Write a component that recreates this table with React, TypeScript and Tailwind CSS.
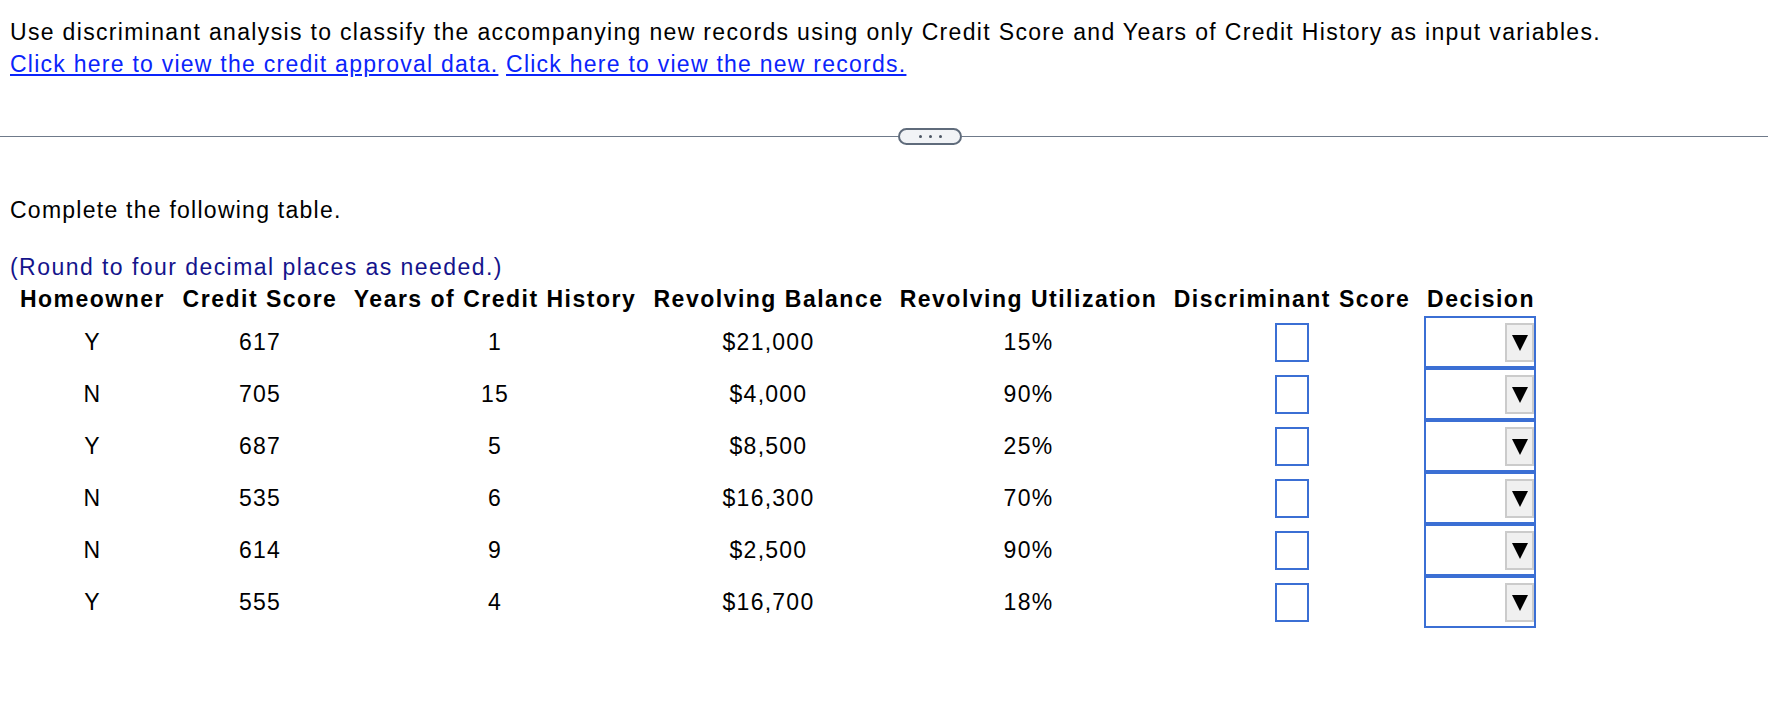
import React from 'react';

interface NewRecord {
  homeowner: string;
  creditScore: number;
  years: number;
  balance: string;
  utilization: string;
}

const records: NewRecord[] = [
  { homeowner: 'Y', creditScore: 617, years: 1, balance: '$21,000', utilization: '15%' },
  { homeowner: 'N', creditScore: 705, years: 15, balance: '$4,000', utilization: '90%' },
  { homeowner: 'Y', creditScore: 687, years: 5, balance: '$8,500', utilization: '25%' },
  { homeowner: 'N', creditScore: 535, years: 6, balance: '$16,300', utilization: '70%' },
  { homeowner: 'N', creditScore: 614, years: 9, balance: '$2,500', utilization: '90%' },
  { homeowner: 'Y', creditScore: 555, years: 4, balance: '$16,700', utilization: '18%' },
];

const headers = [
  'Homeowner',
  'Credit Score',
  'Years of Credit History',
  'Revolving Balance',
  'Revolving Utilization',
  'Discriminant Score',
  'Decision',
];

const gridCols = 'grid grid-cols-[165px_170px_300px_247px_273px_254px_124px]';

const DecisionSelect: React.FC = () => (
  <div className="flex h-[52px] items-center pl-[5px]">
    <div className="flex h-[52px] w-[112px] items-center justify-end border-2 border-[#3b6fd4] bg-white">
      <div className="flex h-[39px] w-[29px] items-center justify-center border-2 border-[#cbcbcb] bg-[#f0f0f0]">
        <svg width="16" height="17" viewBox="0 0 16 17">
          <path d="M0 1 H16 L8 17 Z" fill="#000" />
        </svg>
      </div>
    </div>
  </div>
);

const App: React.FC = () => {
  return (
    <div className="min-h-[712px] bg-white font-['Liberation_Sans',Arial,sans-serif] text-[23px] leading-[27px] tracking-[1.25px] text-black">
      {/* Question text */}
      <div className="px-[10px] pt-[16px] leading-[32px]">
        <p className="tracking-[1.33px]">
          Use discriminant analysis to classify the accompanying new records using only Credit Score and Years of Credit History as input variables.
        </p>
        <p className="text-[#0b24fb]">
          <a href="#" className="underline">Click here to view the credit approval data.</a>{' '}
          <a href="#" className="underline">Click here to view the new records.</a>
        </p>
      </div>

      {/* Divider */}
      <div className="mt-[48px] flex items-center">
        <div className="h-px flex-1 bg-[#6f7a8a]" />
        <div className="flex h-[17px] w-[64px] items-center justify-center gap-[7px] rounded-full border-2 border-[#5f6b7b] bg-[#f1f3f6]">
          <span className="h-[3px] w-[3px] rounded-full bg-[#4b5563]" />
          <span className="h-[3px] w-[3px] rounded-full bg-[#4b5563]" />
          <span className="h-[3px] w-[3px] rounded-full bg-[#4b5563]" />
        </div>
        <div className="h-px w-[806px] bg-[#6f7a8a]" />
      </div>

      <div className="px-[10px]">
        <p className="mt-[52px]">Complete the following table.</p>
        <p className="mt-[30px] tracking-[1.45px] text-[#14148c]">(Round to four decimal places as needed.)</p>

        {/* Table */}
        <div className="mt-[5px]">
          <div className={`${gridCols} h-[30px] font-bold tracking-[1.5px]`}>
            {headers.map((h) => (
              <div key={h} className="text-center whitespace-nowrap">
                {h}
              </div>
            ))}
          </div>
          {records.map((r, i) => (
            <div key={i} className={`${gridCols} h-[52px] items-center`}>
              <div className="text-center">{r.homeowner}</div>
              <div className="text-center">{r.creditScore}</div>
              <div className="text-center">{r.years}</div>
              <div className="text-center">{r.balance}</div>
              <div className="text-center">{r.utilization}</div>
              <div className="flex justify-center">
                <input
                  type="text"
                  className="h-[39px] w-[34px] border-2 border-[#3b6fd4] bg-white outline-none"
                />
              </div>
              <DecisionSelect />
            </div>
          ))}
        </div>
      </div>
    </div>
  );
};

export default App;
